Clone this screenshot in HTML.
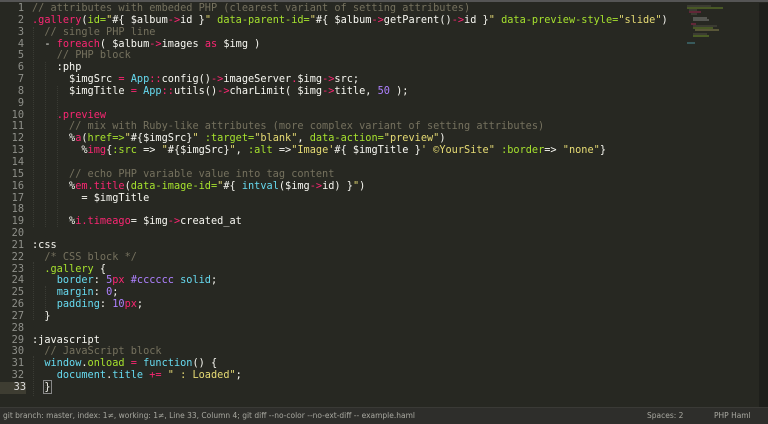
<!DOCTYPE html>
<html><head><meta charset="utf-8"><style>
html,body{margin:0;padding:0;background:#272822;width:768px;height:423px;overflow:hidden}
#top{position:absolute;left:0;top:0;width:768px;height:2px;background:#555}
#gut{position:absolute;left:0;top:3px;width:24px;text-align:right;}
#code{position:absolute;left:32px;top:3px;}
pre{margin:0;font-family:"DejaVu Sans Mono","Liberation Mono",monospace;font-size:10.25px;line-height:11.84px;color:#f8f8f2}
#gut pre{color:#8f908a}
.hl{background:#3e3d32;color:#ddd;display:inline-block;width:30px;margin-left:-4px;text-align:right;padding-right:0}
.c{color:#75715e}.p{color:#f92672}.g{color:#a6e22e}.y{color:#e6db74}.b{color:#66d9ef}.v{color:#ae81ff}
#status{position:absolute;left:0;top:407px;width:768px;height:16px;background:#2e2e2b;border-top:1px solid #3a3a36;font-family:"DejaVu Sans","Liberation Sans",sans-serif;font-size:7.5px;color:#a8a8a0;line-height:15px}
#sb{position:absolute;left:759px;top:3px;width:9px;height:404px;background:#1e1f1b}
#mini{position:absolute;left:687px;top:5px;width:60px;height:40px}
.ig{position:absolute;width:0;border-left:1px dotted #3a3b34}
</style></head><body>
<div id="top"></div>
<div class="ig" style="left:33px;top:27px;height:200px"></div>
<div class="ig" style="left:45px;top:62px;height:165px"></div>
<div class="ig" style="left:57px;top:86px;height:141px"></div>
<div class="ig" style="left:33px;top:262px;height:58px"></div>
<div class="ig" style="left:45px;top:286px;height:34px"></div>
<div class="ig" style="left:33px;top:356px;height:40px"></div>
<div class="ig" style="left:45px;top:380px;height:10px"></div>
<div id="gut"><pre>1
2
3
4
5
6
7
8
9
10
11
12
13
14
15
16
17
18
19
20
21
22
23
24
25
26
27
28
29
30
31
32
<span class="hl">33</span></pre></div>
<div id="code"><pre><span class="c">// attributes with embeded PHP (clearest variant of setting attributes)</span>
<span class="p">.gallery</span>(<span class="g">id=</span><span class="y">"</span>#{ $album<span class="p">-&gt;</span>id }<span class="y">"</span> <span class="g">data-parent-id=</span><span class="y">"</span>#{ $album<span class="p">-&gt;</span>getParent()<span class="p">-&gt;</span>id }<span class="y">"</span> <span class="g">data-preview-style=</span><span class="y">"slide"</span>)
  <span class="c">// single PHP line</span>
  - <span class="p">foreach</span>( $album<span class="p">-&gt;</span>images <span class="p">as</span> $img )
    <span class="c">// PHP block</span>
    :php
      $imgSrc <span class="p">=</span> <span class="b">App</span><span class="p">::</span>config()<span class="p">-&gt;</span>imageServer<span class="p">.</span>$img<span class="p">-&gt;</span>src;
      $imgTitle <span class="p">=</span> <span class="b">App</span><span class="p">::</span>utils()<span class="p">-&gt;</span>charLimit( $img<span class="p">-&gt;</span>title, <span class="v">50</span> );

    <span class="p">.preview</span>
      <span class="c">// mix with Ruby-like attributes (more complex variant of setting attributes)</span>
      %<span class="p">a</span>(<span class="g">href=&gt;</span><span class="y">"</span>#{$imgSrc}<span class="y">"</span> <span class="g">:target=</span><span class="y">"blank"</span>, <span class="g">data-action=</span><span class="y">"preview"</span>)
        %<span class="p">img</span>{<span class="g">:src</span> =&gt; <span class="y">"</span>#{$imgSrc}<span class="y">"</span>, <span class="g">:alt</span> =&gt;<span class="y">"Image'</span>#{ $imgTitle }<span class="y">' ©YourSite"</span> <span class="g">:border</span>=&gt; <span class="y">"none"</span>}

      <span class="c">// echo PHP variable value into tag content</span>
      %<span class="p">em.title</span>(<span class="g">data-image-id=</span><span class="y">"</span>#{ <span class="b">intval</span>($img<span class="p">-&gt;</span>id) }<span class="y">"</span>)
        = $imgTitle

      %<span class="p">i.timeago</span>= $img<span class="p">-&gt;</span>created_at

:css
  <span class="c">/* CSS block */</span>
  <span class="g">.gallery</span> {
    <span class="b">border</span>: <span class="v">5</span><span class="p">px</span> <span class="v">#cccccc</span> <span class="b">solid</span>;
    <span class="b">margin</span>: <span class="v">0</span>;
    <span class="b">padding</span>: <span class="v">10</span><span class="p">px</span>;
  }

:javascript
  <span class="c">// JavaScript block</span>
  <span class="b">window</span>.<span class="g">onload</span> <span class="p">=</span> <span class="b">function</span>() {
    <span class="b">document</span>.<span class="b">title</span> <span class="p">+=</span> <span class="y">" : Loaded"</span>;
  <span style="outline:1px solid #888">}</span></pre></div>
<svg id="mini" viewBox="0 0 60 40"><g stroke-width="0.8" opacity="0.7">
<line x1="0" y1="1" x2="24" y2="1" stroke="#75715e"/><line x1="0" y1="3" x2="36" y2="3" stroke="#a6e22e"/>
<line x1="2" y1="5" x2="10" y2="5" stroke="#75715e"/><line x1="2" y1="7" x2="14" y2="7" stroke="#f92672"/>
<line x1="4" y1="9" x2="10" y2="9" stroke="#75715e"/><line x1="6" y1="13" x2="20" y2="13" stroke="#ccc"/>
<line x1="6" y1="15" x2="22" y2="15" stroke="#ccc"/><line x1="4" y1="19" x2="9" y2="19" stroke="#f92672"/>
<line x1="6" y1="21" x2="30" y2="21" stroke="#75715e"/><line x1="6" y1="23" x2="26" y2="23" stroke="#a6e22e"/>
<line x1="8" y1="25" x2="32" y2="25" stroke="#e6db74"/><line x1="6" y1="29" x2="20" y2="29" stroke="#75715e"/>
<line x1="6" y1="31" x2="22" y2="31" stroke="#a6e22e"/><line x1="0" y1="38" x2="8" y2="38" stroke="#66d9ef"/>
</g></svg>
<div id="sb"></div>
<div id="status"><span style="position:absolute;left:3px">git branch: master, index: 1≠, working: 1≠, Line 33, Column 4; git diff --no-color --no-ext-diff -- example.haml</span><span style="position:absolute;left:647px">Spaces: 2</span><span style="position:absolute;left:714px">PHP Haml</span></div>
</body></html>
